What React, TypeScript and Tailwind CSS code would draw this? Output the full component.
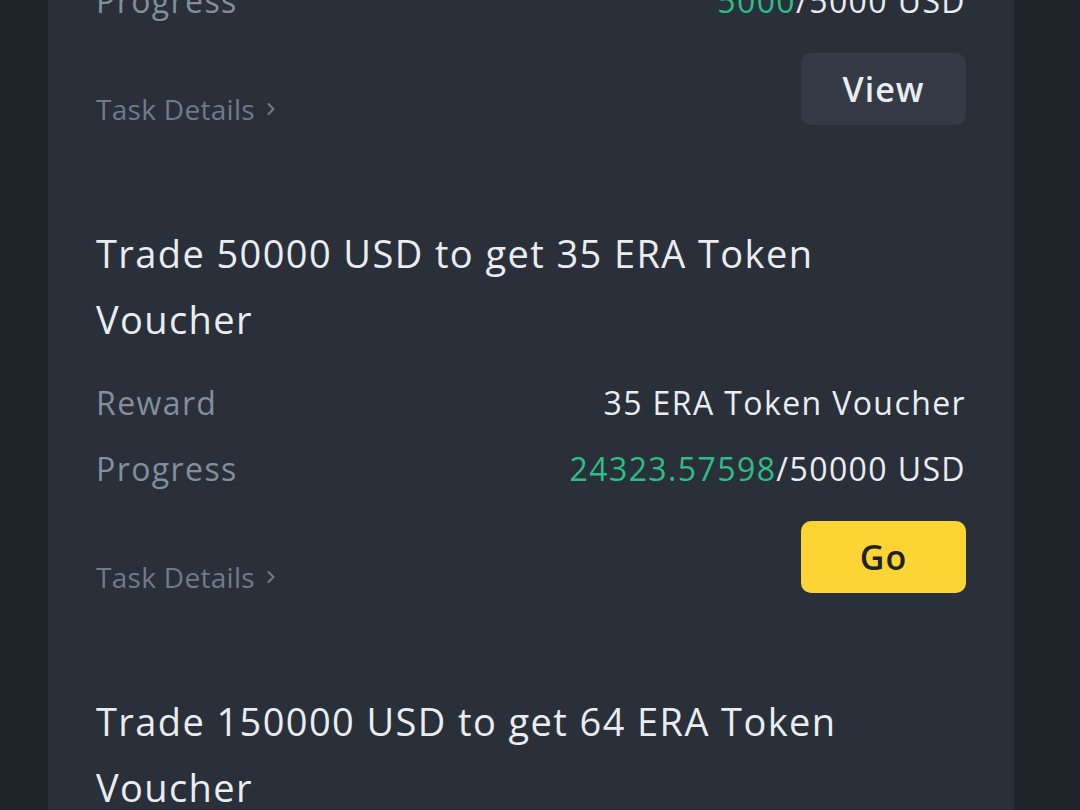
import { ChevronRight } from "lucide-react";

type Task = {
  title: string;
  reward: string;
  done: string;
  target: string;
  finished: boolean;
};

const tasks: Task[] = [
  { title: "Trade 5000 USD to get 4 ERA Token Voucher", reward: "4 ERA Token Voucher", done: "5000", target: "5000", finished: true },
  { title: "Trade 50000 USD to get 35 ERA Token Voucher", reward: "35 ERA Token Voucher", done: "24323.57598", target: "50000", finished: false },
  { title: "Trade 150000 USD to get 64 ERA Token Voucher", reward: "64 ERA Token Voucher", done: "24323.57598", target: "150000", finished: false },
];

export default function App() {
  return (
    <div
      className="h-[810px] w-[1080px] overflow-hidden bg-[#1f242b]"
      style={{ fontFamily: "'Open Sans', Lato, sans-serif" }}
    >
      <div className="mx-12 w-[966px] bg-[#29303a] px-12 pb-20">
        <div className="-mt-[248px] flex flex-col gap-[95px]">
          {tasks.map((t, i) => (
            <div key={i} className="flex flex-col">
              {/* Title */}
              <h2 className="max-w-[800px] text-[38px] leading-[66px] tracking-[1.4px] font-medium text-[#eaecef]">
                {t.title}
              </h2>

              {/* Rows */}
              <div className="mt-[18px] flex justify-between items-center h-[66px] text-[32px] tracking-[1.4px]">
                <span className="text-[#848e9c]">Reward</span>
                <span className="text-[#eaecef]">{t.reward}</span>
              </div>
              <div className="flex justify-between items-center h-[66px] text-[32px] tracking-[1.4px]">
                <span className="text-[#848e9c]">Progress</span>
                <span className="text-[#eaecef]">
                  <span className="text-[#2ebd85]">{t.done}</span>/{t.target} USD
                </span>
              </div>

              {/* Actions */}
              <div className="mt-[19px] flex justify-between items-end">
                <button className="flex items-center gap-1.5 text-[28px] leading-[32px] font-medium tracking-[0.3px] text-[#707a8a]">
                  Task Details
                  <ChevronRight size={20} strokeWidth={2.5} />
                </button>
                {t.finished ? (
                  <button className="w-[165px] h-[72px] rounded-[10px] bg-[#343b46] text-[34px] font-semibold tracking-[1px] text-[#eaecef]">
                    View
                  </button>
                ) : (
                  <button className="w-[165px] h-[72px] rounded-[10px] bg-[#fcd535] text-[34px] font-semibold tracking-[1px] text-[#1e2329]">
                    Go
                  </button>
                )}
              </div>
            </div>
          ))}
        </div>
      </div>
    </div>
  );
}
